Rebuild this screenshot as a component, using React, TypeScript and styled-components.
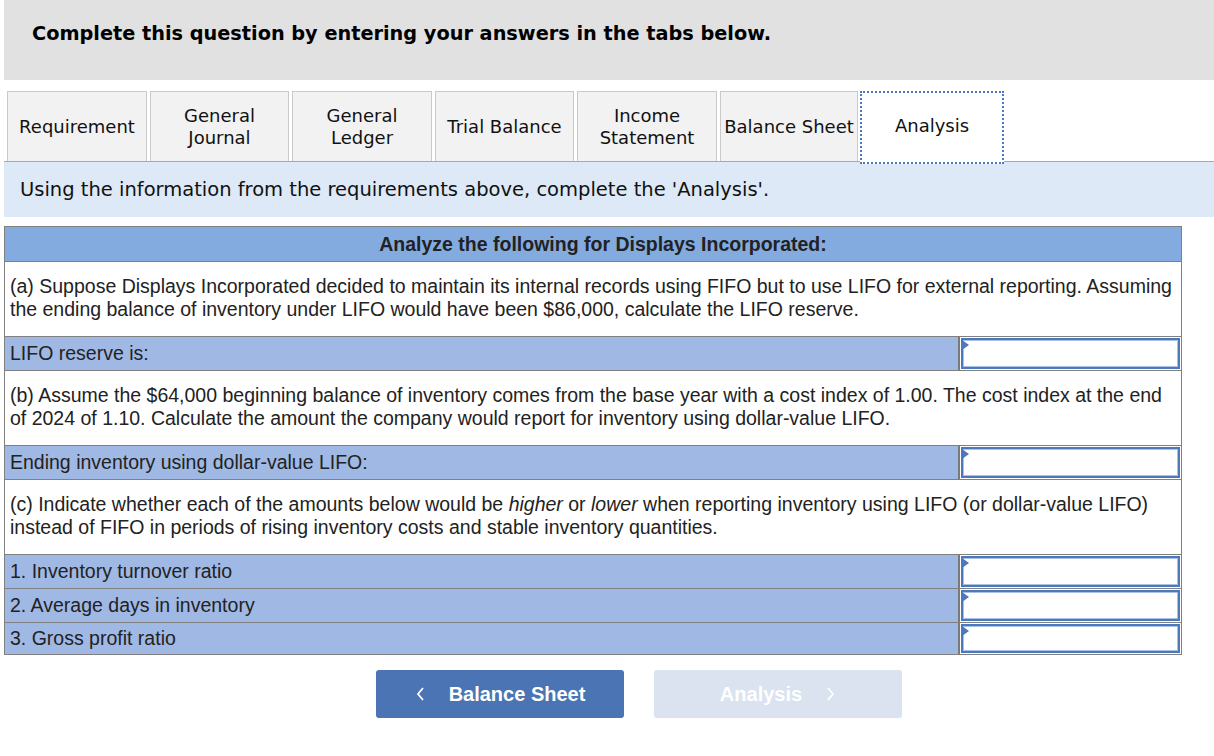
import React, { useState } from 'react';
import styled, { createGlobalStyle } from 'styled-components';

const GlobalStyle = createGlobalStyle`
  body {
    margin: 0;
    background: #fff;
    font-family: "Liberation Sans", Arial, sans-serif;
  }
`;

const tabs = [
  { title: 'Requirement', width: 140 },
  { title: 'General\nJournal', width: 139 },
  { title: 'General\nLedger', width: 140 },
  { title: 'Trial Balance', width: 139 },
  { title: 'Income\nStatement', width: 140 },
  { title: 'Balance Sheet', width: 138 },
  { title: 'Analysis', width: 144 },
];

const Page = styled.div`
  width: 1210px;
  padding-left: 4px;
`;

const Banner = styled.div`
  height: 80px;
  background: #e1e1e1;
  display: flex;
  align-items: flex-start;
  padding: 22px 0 0 28px;
  box-sizing: border-box;
  font-family: "DejaVu Sans", Verdana, sans-serif;
  font-weight: bold;
  font-size: 19.3px;
  color: #000;
`;

const TabBar = styled.div`
  display: flex;
  align-items: flex-start;
  gap: 3px;
  height: 70px;
  padding: 11px 0 0 3px;
  border-bottom: 1px solid #a9a9a9;
`;

const Tab = styled.div<{ $active: boolean; $width: number }>`
  width: ${(p) => p.$width}px;
  height: ${(p) => (p.$active ? '73px' : '70px')};
  flex-shrink: 0;
  box-sizing: border-box;
  display: flex;
  align-items: center;
  justify-content: center;
  text-align: center;
  white-space: pre-line;
  font-family: "DejaVu Sans", Verdana, sans-serif;
  font-size: 18px;
  line-height: 22px;
  color: #111;
  cursor: pointer;
  background: ${(p) => (p.$active ? '#fff' : '#f2f2f2')};
  border: ${(p) => (p.$active ? '2px dotted #4c78be' : '1px solid #c9c9c9')};
  border-bottom: ${(p) => (p.$active ? '2px dotted #4c78be' : 'none')};
  padding-bottom: ${(p) => (p.$active ? '3px' : '0')};
  margin-left: ${(p) => (p.$active ? '-1px' : '0')};
  position: relative;
  z-index: ${(p) => (p.$active ? 1 : 0)};
`;

const Instruction = styled.div`
  height: 55px;
  background: #dde9f6;
  display: flex;
  align-items: center;
  padding-left: 16px;
  font-family: "DejaVu Sans", Verdana, sans-serif;
  font-size: 19.5px;
  color: #111;
`;

const Table = styled.div`
  margin-top: 9px;
  width: 1178px;
  border: 1px solid #808080;
  box-sizing: border-box;
  color: #222;
  font-size: 19.5px;
`;

const HeadRow = styled.div`
  height: 34px;
  background: #84abdf;
  border-bottom: 1px solid #808080;
  display: flex;
  align-items: center;
  justify-content: center;
  font-weight: bold;
  padding-left: 20px;
`;

const TextRow = styled.div`
  padding: 13px 6px 15px 5px;
  line-height: 23px;
  border-bottom: 1px solid #808080;
  background: #fff;
`;

const InputRow = styled.div<{ $last?: boolean }>`
  display: flex;
  height: ${(p) => (p.$last ? '31px' : '33px')};
  background: #a0b8e4;
  border-bottom: ${(p) => (p.$last ? 'none' : '1px solid #808080')};
`;

const Label = styled.div`
  flex: 1;
  display: flex;
  align-items: center;
  padding-left: 5px;
  border-right: 2px solid #7a7a7a;
`;

const Cell = styled.div`
  width: 221px;
  padding: 1px;
  box-sizing: border-box;
  background: #fff;
`;

const Input = styled.div`
  position: relative;
  height: 100%;
  box-sizing: border-box;
  border: 2px solid #4d78bb;
  box-shadow: inset 0 0 0 1px #a9c0e6;
  background: #fff;
  &::before {
    content: '';
    position: absolute;
    left: -1px;
    top: 0;
    border-left: 7px solid #4d78bb;
    border-top: 5px solid transparent;
    border-bottom: 5px solid transparent;
  }
`;

const Nav = styled.div`
  display: flex;
  gap: 30px;
  padding: 15px 0 0 372px;
`;

const NavButton = styled.button<{ $disabled?: boolean }>`
  width: 248px;
  height: 48px;
  border: none;
  border-radius: 3px;
  background: ${(p) => (p.$disabled ? '#dae3ef' : '#4a74b3')};
  color: #fff;
  font-family: "Liberation Sans", Arial, sans-serif;
  font-weight: bold;
  font-size: 20px;
  display: flex;
  align-items: center;
  justify-content: center;
  gap: 24px;
  cursor: ${(p) => (p.$disabled ? 'default' : 'pointer')};
`;

const Chevron = ({ dir }: { dir: 'left' | 'right' }) => (
  <svg width="10" height="16" viewBox="0 0 10 16">
    <path
      d={dir === 'left' ? 'M8 2 L3 8 L8 14' : 'M2 2 L7 8 L2 14'}
      fill="none"
      stroke="#fff"
      strokeWidth="1.8"
    />
  </svg>
);

const App: React.FC = () => {
  const [activeTab, setActiveTab] = useState(6);

  return (
    <Page>
      <GlobalStyle />
      <Banner>Complete this question by entering your answers in the tabs below.</Banner>
      <TabBar>
        {tabs.map((item, index) => (
          <Tab
            key={index}
            $width={item.width}
            $active={activeTab === index}
            onClick={() => setActiveTab(index)}
          >
            {item.title}
          </Tab>
        ))}
      </TabBar>
      <Instruction>Using the information from the requirements above, complete the 'Analysis'.</Instruction>
      <Table>
        <HeadRow>Analyze the following for Displays Incorporated:</HeadRow>
        <TextRow>
          (a) Suppose Displays Incorporated decided to maintain its internal records using FIFO but to use LIFO for external reporting. Assuming the ending balance of inventory under LIFO would have been $86,000, calculate the LIFO reserve.
        </TextRow>
        <InputRow>
          <Label>LIFO reserve is:</Label>
          <Cell><Input /></Cell>
        </InputRow>
        <TextRow>
          (b) Assume the $64,000 beginning balance of inventory comes from the base year with a cost index of 1.00. The cost index at the end of 2024 of 1.10. Calculate the amount the company would report for inventory using dollar-value LIFO.
        </TextRow>
        <InputRow>
          <Label>Ending inventory using dollar-value LIFO:</Label>
          <Cell><Input /></Cell>
        </InputRow>
        <TextRow>
          (c) Indicate whether each of the amounts below would be <i>higher</i> or <i>lower</i> when reporting inventory using LIFO (or dollar-value LIFO) instead of FIFO in periods of rising inventory costs and stable inventory quantities.
        </TextRow>
        <InputRow>
          <Label>1. Inventory turnover ratio</Label>
          <Cell><Input /></Cell>
        </InputRow>
        <InputRow>
          <Label>2. Average days in inventory</Label>
          <Cell><Input /></Cell>
        </InputRow>
        <InputRow $last>
          <Label>3. Gross profit ratio</Label>
          <Cell><Input /></Cell>
        </InputRow>
      </Table>
      <Nav>
        <NavButton>
          <Chevron dir="left" />
          Balance Sheet
        </NavButton>
        <NavButton $disabled>
          Analysis
          <Chevron dir="right" />
        </NavButton>
      </Nav>
    </Page>
  );
};

export default App;
